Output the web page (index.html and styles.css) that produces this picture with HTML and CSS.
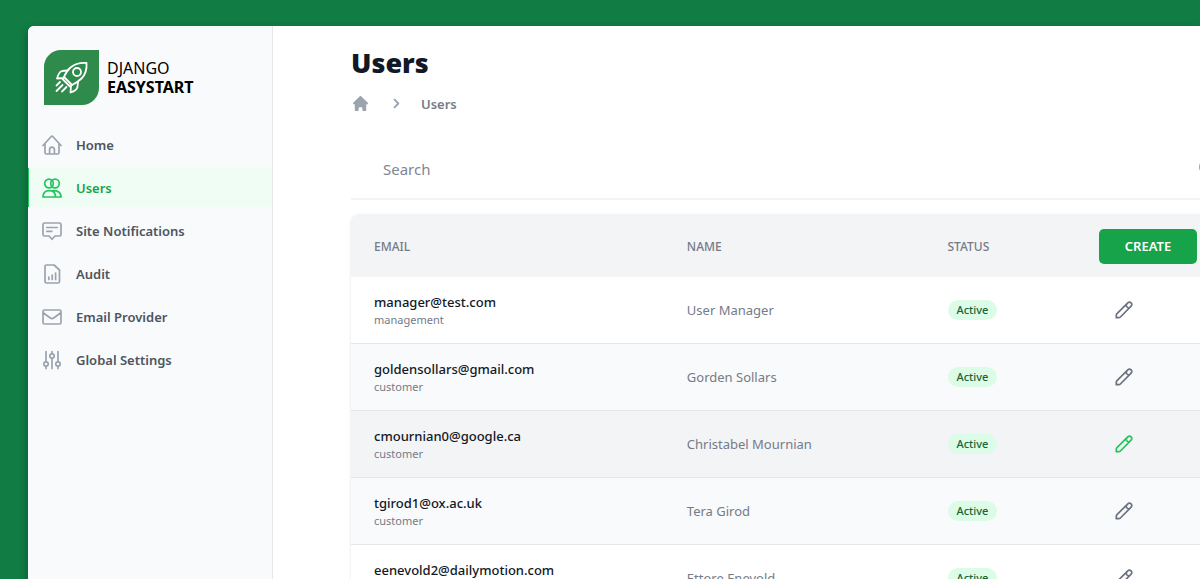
FILE: index.html
```
<!DOCTYPE html>
<html lang="en">
<head>
  <meta charset="UTF-8" />
  <title>Users</title>
  <meta name="viewport" content="width=device-width, initial-scale=1.0" />
  <link rel="stylesheet" href="styles.css">
</head>
<body>
  <!-- shared icons -->
  <svg class="sprite" aria-hidden="true">
    <symbol id="pencil" viewBox="0 0 18 18">
      <path d="M1.300 16.700v-2.400c0-.7.200-1.200.7-1.700L12.800 1.900a2.300 2.300 0 0 1 3.300 3.300L5.400 16c-.5.5-1 .7-1.700.7zM12 2.800a2.300 2.300 0 0 0 3.200 3.300" />
    </symbol>
  </svg>

  <div class="app">
    <aside class="sidebar">
      <a class="logo" href="#">
        <svg class="logo-mark" viewBox="0 0 55 55" aria-hidden="true">
          <path fill="#2e8b4b" d="M17 0h38v38a17 17 0 0 1-17 17H0V17A17 17 0 0 1 17 0z" />
          <g fill="none" stroke="#fff" stroke-width="1.800" stroke-linecap="round" stroke-linejoin="round">
            <path d="M42.500 13c.5 6-1 11.500-5 15.500-3 3-6.500 5-9.500 6.500L20 27c1.500-3.500 3.500-7 6.500-9.500C31 13.700 36.500 12.600 42.500 13z" />
            <circle cx="33" cy="22" r="4" />
            <path d="M20 27l-1.500 2 7.500 7.500 2-1.500M23.500 20.500l-5.500.500c-2 .500-4 4-5 7.500l6.500-.500M34 32l-.500 5c-.500 2.500-4 4.500-7 5.500l.500-6.200M16 32l-3.500 3.500M18.500 35L12.500 41M22.500 37L18 41.500" />
          </g>
        </svg>
        <span class="logo-text"><span>DJANGO</span><strong>EASYSTART</strong></span>
      </a>

      <nav class="menu">
        <a href="#">
          <svg viewBox="0 0 20 20"><path d="M1 10.500l8-8.800q1-1 2 0l8 8.800M3 8.500V17.500q0 1.500 1.500 1.500h11q1.500 0 1.500-1.500V8.500M7.600 19v-4.500a2.400 2.400 0 0 1 4.800 0V19" /></svg>
          Home
        </a>
        <a class="active" href="#">
          <svg viewBox="0 0 20 20"><circle cx="7" cy="5.500" r="4.300" /><circle cx="13" cy="5.500" r="4.300" /><path d="M1 19c0-4 2-6.300 6-6.300s6.500 2.300 6.500 6.300zM9.500 12.900c5.500-1 9.500 1 9.500 6.100h-5.500" /></svg>
          Users
        </a>
        <a href="#">
          <svg viewBox="0 0 20 20"><path d="M2.500 2h15Q19 2 19 3.500v10q0 1.500-1.500 1.500H13l-3 3.300L7 15H2.500Q1 15 1 13.500v-10Q1 2 2.500 2zM4.800 6.500h10.400M4.800 10.300h5" /></svg>
          Site Notifications
        </a>
        <a href="#">
          <svg viewBox="0 0 20 20"><path d="M4.500 1h7.500l5.500 5v11.500q0 1.500-1.500 1.500H4.500Q3 19 3 17.500v-15Q3 1 4.500 1zM6.800 13v2.500M10.200 11v4.500M13.600 9v6.500" /></svg>
          Audit
        </a>
        <a href="#">
          <svg viewBox="0 0 20 20"><path d="M2.500 3h15Q19 3 19 4.500v11q0 1.500-1.500 1.500h-15Q1 17 1 15.500v-11Q1 3 2.500 3zM1.500 6l6.800 5q1.700 1.200 3.400 0l6.800-5" /></svg>
          Email Provider
        </a>
        <a href="#">
          <svg viewBox="0 0 20 20"><circle cx="4" cy="14" r="2.200" /><circle cx="10" cy="6" r="2.200" /><circle cx="16" cy="14" r="2.200" /><path d="M4 1.500v10.300M4 16.200v2.300M10 1.500v2.300M10 8.200v10.300M16 1.500v10.300M16 16.200v2.300" /></svg>
          Global Settings
        </a>
      </nav>
    </aside>

    <main class="content">
      <h1>Users</h1>
      <nav class="breadcrumb" aria-label="Breadcrumb">
        <a href="#" aria-label="Home">
          <svg viewBox="0 0 20 20" fill="currentColor"><path d="M10.700 2.300a1 1 0 0 0-1.400 0l-7 7a1 1 0 0 0 1.400 1.400l.3-.3V17a1 1 0 0 0 1 1h2a1 1 0 0 0 1-1v-2a1 1 0 0 1 1-1h2a1 1 0 0 1 1 1v2a1 1 0 0 0 1 1h2a1 1 0 0 0 1-1v-6.600l.3.300a1 1 0 0 0 1.400-1.400z" /></svg>
        </a>
        <svg viewBox="0 0 20 20" fill="none" stroke="currentColor" stroke-width="2" stroke-linecap="round" stroke-linejoin="round"><path d="M9 6l4 4-4 4" /></svg>
        <a href="#">Users</a>
      </nav>

      <form class="search">
        <input type="search" placeholder="Search" aria-label="Search" />
        <button type="submit" aria-label="Search">
          <svg viewBox="0 0 20 20" fill="none" stroke="currentColor" stroke-width="2"><circle cx="8" cy="8" r="6" /><path d="M13 13l5 5" /></svg>
        </button>
      </form>

      <table class="users">
        <thead>
          <tr>
            <th class="col-email">Email</th>
            <th class="col-name">Name</th>
            <th>Status</th>
            <th class="col-actions"><button class="create" type="button">CREATE</button></th>
          </tr>
        </thead>
        <tbody>
          <tr>
            <td><a class="email" href="#">manager@test.com</a><span class="role">management</span></td>
            <td>User Manager</td>
            <td><span class="badge">Active</span></td>
            <td><button class="edit" type="button" aria-label="Edit"><svg><use href="#pencil" /></svg></button></td>
          </tr>
          <tr>
            <td><a class="email" href="#">goldensollars@gmail.com</a><span class="role">customer</span></td>
            <td>Gorden Sollars</td>
            <td><span class="badge">Active</span></td>
            <td><button class="edit" type="button" aria-label="Edit"><svg><use href="#pencil" /></svg></button></td>
          </tr>
          <tr class="selected">
            <td><a class="email" href="#">cmournian0@google.ca</a><span class="role">customer</span></td>
            <td>Christabel Mournian</td>
            <td><span class="badge">Active</span></td>
            <td><button class="edit" type="button" aria-label="Edit"><svg><use href="#pencil" /></svg></button></td>
          </tr>
          <tr>
            <td><a class="email" href="#">tgirod1@ox.ac.uk</a><span class="role">customer</span></td>
            <td>Tera Girod</td>
            <td><span class="badge">Active</span></td>
            <td><button class="edit" type="button" aria-label="Edit"><svg><use href="#pencil" /></svg></button></td>
          </tr>
          <tr>
            <td><a class="email" href="#">eenevold2@dailymotion.com</a><span class="role">customer</span></td>
            <td>Ettore Enevold</td>
            <td><span class="badge">Active</span></td>
            <td><button class="edit" type="button" aria-label="Edit"><svg><use href="#pencil" /></svg></button></td>
          </tr>
        </tbody>
      </table>
    </main>
  </div>
</body>
</html>
```
FILE: styles.css
```
* {
  box-sizing: border-box;
}

body {
  margin: 0;
  padding: 26px 0 0 28px;
  height: 100vh;
  overflow: hidden;
  background: #117c43;
  font-family: "Noto Sans", sans-serif;
  font-size: 13px;
  color: #757b87;
}

a {
  color: inherit;
  text-decoration: none;
}

button {
  padding: 0;
  border: none;
  background: none;
  font-family: inherit;
  cursor: pointer;
}

svg {
  display: block;
}

.sprite {
  display: none;
}

.app {
  display: flex;
  min-height: 100%;
  background: #fff;
  border-top-left-radius: 6px;
  box-shadow: 0 4px 10px rgba(0, 0, 0, 0.3);
}

/* sidebar */
.sidebar {
  flex: 0 0 245px;
  background: #f9fafb;
  border-right: 1px solid #e5e7eb;
  border-top-left-radius: 6px;
}

.logo {
  display: flex;
  align-items: center;
  gap: 8px;
  padding: 24px 16px 20px;
  color: #000;
}

.logo-mark {
  width: 55px;
  height: 55px;
}

.logo-text {
  display: flex;
  flex-direction: column;
  font-size: 16px;
  line-height: 19px;
}

.logo-text strong {
  font-weight: 700;
}

.menu {
  display: flex;
  flex-direction: column;
  gap: 4px;
}

.menu a {
  display: flex;
  align-items: center;
  gap: 14px;
  height: 39px;
  padding-left: 13px;
  border-left: 1px solid transparent;
  font-weight: 600;
  color: #4b5563;
}

.menu svg {
  width: 20px;
  height: 20px;
  fill: none;
  stroke: #9ca3af;
  stroke-width: 1.7;
  stroke-linecap: round;
  stroke-linejoin: round;
}

.menu .active {
  background: #f0fdf4;
  border-color: #22c55e;
  color: #16a34a;
}

.menu .active svg {
  stroke: #22c55e;
}

/* main area */
.content {
  flex: 1;
  min-width: 0;
  margin-right: -20px;
  padding: 19px 0 0 78px;
}

h1 {
  margin: 0;
  font-size: 27px;
  line-height: 35px;
  font-weight: 900;
  color: #111827;
}

.breadcrumb {
  display: flex;
  align-items: center;
  gap: 16px;
  margin-top: 14px;
  font-weight: 600;
}

.breadcrumb svg {
  width: 19px;
  height: 19px;
  color: #9ca3af;
}

.search {
  display: flex;
  align-items: center;
  margin: 26px 0 15px;
  height: 61px;
  padding: 0 2px 0 32px;
  border-bottom: 2px solid #f3f4f6;
}

.search input {
  flex: 1;
  padding: 0;
  border: none;
  outline: none;
  font: 15px "Noto Sans", sans-serif;
}

.search input::placeholder {
  color: #808690;
}

.search button {
  color: #9ca3af;
}

.search svg {
  width: 20px;
  height: 20px;
}

/* table */
.users {
  width: 100%;
  table-layout: fixed;
  border-spacing: 0;
  border-radius: 8px;
  box-shadow: 0 0 3px rgba(0, 0, 0, 0.12);
}

.col-email {
  width: 36%;
}

.col-name {
  width: 30%;
}

.col-actions {
  width: 144px;
}

th,
td {
  padding: 0 0 0 23px;
  text-align: left;
}

th {
  height: 62px;
  background: #f3f4f6;
  font-size: 12px;
  font-weight: 500;
  text-transform: uppercase;
}

th:first-child {
  border-top-left-radius: 8px;
}

td {
  height: 67px;
  border-bottom: 1px solid #e5e7eb;
}

tbody tr:nth-child(even) {
  background: #f9fafb;
}

tbody .selected {
  background: #f3f4f6;
}

.email,
.role {
  display: block;
}

.email {
  line-height: 20px;
  font-weight: 500;
  color: #111827;
}

.role {
  font-size: 11px;
  line-height: 16px;
}

.badge {
  display: block;
  width: fit-content;
  padding: 0 9px;
  border-radius: 10px;
  background: #dcfce7;
  font-size: 11px;
  line-height: 20px;
  font-weight: 500;
  color: #166534;
}

.create {
  width: 98px;
  height: 35px;
  border-radius: 5px;
  background: #16a34a;
  font-size: 13px;
  font-weight: 600;
  color: #fff;
}

.edit {
  display: block;
  margin-left: 16px;
  color: #6b7280;
}

.edit svg {
  width: 18px;
  height: 18px;
  fill: none;
  stroke: currentColor;
  stroke-width: 1.7;
  stroke-linejoin: round;
}

.selected .edit {
  color: #22c55e;
}
```
